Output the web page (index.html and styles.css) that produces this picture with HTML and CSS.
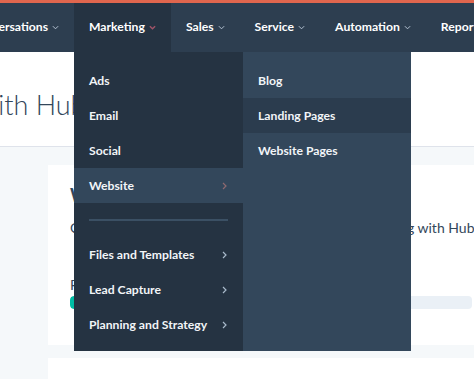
FILE: index.html
```html
<!DOCTYPE html>
<html lang="en">
<head>
<meta charset="utf-8">
<title>Marketing menu</title>
<link rel="stylesheet" href="styles.css">
</head>
<body>
<div class="topbar"></div>
<nav class="nav">
  <div class="tab tab-first"><span>Conversations</span><svg class="caret" viewBox="0 0 8 5"><path d="M1 1l3 3 3-3"/></svg></div>
  <div class="tab tab-active"><span>Marketing</span><svg class="caret caret-hot" viewBox="0 0 8 5"><path d="M1 1l3 3 3-3"/></svg>
    <div class="menu">
      <div class="item">Ads</div>
      <div class="item">Email</div>
      <div class="item">Social</div>
      <div class="item item-open">Website<svg class="arrow arrow-hot" viewBox="0 0 5 8"><path d="M1 1l3 3-3 3"/></svg></div>
      <div class="sep"></div>
      <div class="item">Files and Templates<svg class="arrow" viewBox="0 0 5 8"><path d="M1 1l3 3-3 3"/></svg></div>
      <div class="item">Lead Capture<svg class="arrow" viewBox="0 0 5 8"><path d="M1 1l3 3-3 3"/></svg></div>
      <div class="item">Planning and Strategy<svg class="arrow" viewBox="0 0 5 8"><path d="M1 1l3 3-3 3"/></svg></div>
      <div class="submenu">
        <div class="item">Blog</div>
        <div class="item item-hover">Landing Pages</div>
        <div class="item">Website Pages</div>
      </div>
    </div>
  </div>
  <div class="tab"><span>Sales</span><svg class="caret" viewBox="0 0 8 5"><path d="M1 1l3 3 3-3"/></svg></div>
  <div class="tab"><span>Service</span><svg class="caret" viewBox="0 0 8 5"><path d="M1 1l3 3 3-3"/></svg></div>
  <div class="tab"><span>Automation</span><svg class="caret" viewBox="0 0 8 5"><path d="M1 1l3 3 3-3"/></svg></div>
  <div class="tab"><span>Reports</span><svg class="caret" viewBox="0 0 8 5"><path d="M1 1l3 3 3-3"/></svg></div>
</nav>
<main class="page">
  <header class="page-head">
    <h1 class="title">Get started with HubSpot</h1>
  </header>
  <section class="content">
    <div class="card">
      <h2 class="card-title">Welcome to HubSpot</h2>
      <p class="card-text">Complete these four tasks to learn the basics of working with HubSpot</p>
      <div class="progress-label">Finished 1 of 12 tasks</div>
      <div class="track"><div class="fill" style="width: 8%"></div></div>
    </div>
    <div class="card card-next"></div>
  </section>
</main>
</body>
</html>
```

FILE: styles.css
```css
* { box-sizing: border-box; }
html, body {
  margin: 0;
  padding: 0;
  width: 474px;
  height: 379px;
  overflow: hidden;
  background: #ffffff;
  font-family: "Lato", "Open Sans", sans-serif;
}
.topbar {
  height: 3px;
  background: #e0664e;
}
.nav {
  display: flex;
  height: 49px;
  background: #2d3e50;
  white-space: nowrap;
  overflow: visible;
}
.tab {
  position: relative;
  display: flex;
  align-items: center;
  gap: 4px;
  padding: 0 15px;
  color: #ffffff;
  font-size: 12.2px;
  font-weight: 700;
  flex: none;
}
.tab span { position: relative; top: -1px; }
.tab-first {
  width: 74px;
  justify-content: flex-end;
  overflow: hidden;
}
.tab-active {
  background: #253342;
}
.caret {
  width: 7px;
  height: 5px;
  fill: none;
  stroke: #b9c7d6;
  stroke-width: 1.1;
  flex: none;
}
.caret-hot { stroke: #a05468; stroke-width: 1.6; }
.menu {
  position: absolute;
  top: 100%;
  left: 0;
  width: 169px;
  height: 299px;
  padding-top: 11px;
  background: #253342;
  z-index: 10;
}
.item {
  display: flex;
  align-items: center;
  justify-content: space-between;
  height: 35px;
  padding: 0 16px 0 15px;
  color: #f2f5f8;
  font-size: 12.2px;
  font-weight: 700;
}
.item-open { background: #33475b; }
.arrow {
  width: 5px;
  height: 8px;
  fill: none;
  stroke: #a9bacb;
  stroke-width: 1.2;
}
.arrow-hot { stroke: #8f6a70; }
.sep {
  height: 2px;
  margin: 16px 15px;
  background: #3b5064;
}
.submenu {
  position: absolute;
  top: 0;
  left: 100%;
  width: 168px;
  height: 299px;
  padding-top: 11px;
  background: #33475b;
}
.submenu .item { padding-left: 15px; }
.item-hover { background: #2b3c4e; }

.page { background: #f5f8fa; height: 327px; overflow: hidden; }
.page-head {
  height: 95px;
  background: #ffffff;
  border-bottom: 1px solid #dfe3eb;
  padding-top: 37px;
  overflow: hidden;
}
.title {
  margin: 0 0 0 -161px;
  font-size: 27px;
  line-height: 32px;
  font-weight: 300;
  color: #33475b;
  white-space: nowrap;
}
.content {
  padding: 18px 0 0 48px;
}
.card {
  background: #ffffff;
  padding: 18px 0 36px 22px;
  width: 460px;
}
.card-title {
  margin: 0;
  font-size: 18px;
  line-height: 24px;
  font-weight: 700;
  color: #33475b;
}
.card-text {
  margin: 11px 0 0;
  font-size: 14px;
  line-height: 20px;
  color: #33475b;
  white-space: nowrap;
}
.progress-label {
  margin-top: 37px;
  font-size: 14px;
  line-height: 20px;
  color: #33475b;
}
.track {
  margin-top: 1px;
  width: 402px;
  height: 13px;
  border-radius: 4px;
  background: #eaf0f6;
  overflow: hidden;
}
.fill {
  height: 100%;
  background: #00bda5;
  border-radius: 4px;
}
.card-next {
  margin-top: 13px;
  height: 40px;
  padding: 0;
}
```
